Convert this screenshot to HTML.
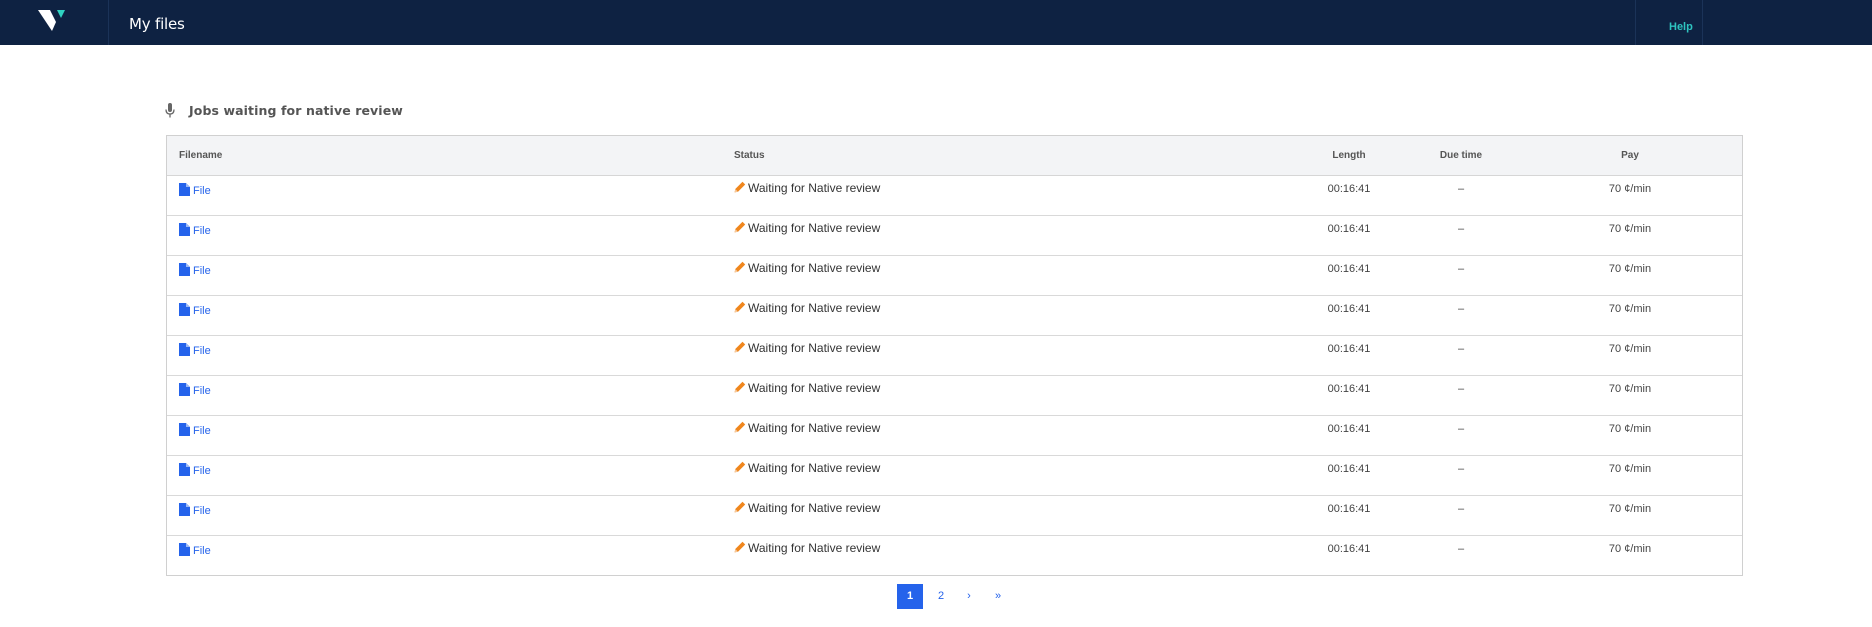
<!DOCTYPE html>
<html><head><meta charset="utf-8"><style>
*{margin:0;padding:0;box-sizing:border-box}
body{width:1872px;height:627px;background:#fff;font-family:"Liberation Sans",Arial,sans-serif;position:relative;overflow:hidden}
.hdr{position:absolute;left:0;top:0;width:1872px;height:45px;background:#0e2242}
.vl{position:absolute;top:0;width:1px;height:45px;background:#1b3358}
.title{position:absolute;left:129px;top:15px;color:#fff;font-size:15px;font-family:"DejaVu Sans","Liberation Sans",sans-serif;letter-spacing:-0.2px}
.help{position:absolute;left:1669px;top:21px;color:#2ec4c0;font-size:11px;font-weight:bold}
h2{position:absolute;left:189px;top:103px;font-size:12.5px;color:#555;font-family:"DejaVu Sans",sans-serif;font-weight:bold;letter-spacing:0.1px}
.tbl{position:absolute;left:166px;top:135px;width:1577px;height:441px;border:1px solid #d0d0d0}
.th{position:absolute;left:0;top:0;width:100%;height:40px;background:#f3f4f6;border-bottom:1px solid #d6d6d6}
.th span{position:absolute;top:14px;font-size:10px;font-weight:bold;color:#555}
.row{position:absolute;left:0;width:100%;height:40px;border-bottom:1px solid #d9d9d9}
.row:last-child{border-bottom:none}
.c{position:absolute;top:7px;font-size:11px;color:#444}
.f{left:12px;color:#2563eb;font-size:11px}
.f svg{vertical-align:-2px;margin-right:3px}
.s{left:567px;font-size:12px;color:#333;top:5px}
.s svg{vertical-align:-1px;margin-right:2px}
.ctr{transform:translateX(-50%)}
.pg{position:absolute;top:584px;height:25px;font-size:11px;color:#2563eb;text-align:center;line-height:25px;width:26px}
</style></head><body>
<div class="hdr">
<svg style="position:absolute;left:36px;top:9px" width="32" height="24" viewBox="0 0 32 24"><polygon points="2,1 14,1 20,13 16,22" fill="#fff"/><polygon points="21,1 29,1 25,9" fill="#2fd3c2"/></svg>
<div class="vl" style="left:108px"></div>
<div class="title">My files</div>
<div class="vl" style="left:1635px"></div>
<div class="help">Help</div>
<div class="vl" style="left:1702px"></div>
</div>
<svg style="position:absolute;left:165px;top:103px" width="10" height="15" viewBox="0 0 10 15"><rect x="3" y="0" width="4" height="9" rx="2" fill="#666"/><path d="M1 6.5 Q1 11 5 11 Q9 11 9 6.5" stroke="#666" stroke-width="1.3" fill="none"/><line x1="5" y1="11" x2="5" y2="14.5" stroke="#666" stroke-width="1.3"/></svg>
<h2>Jobs waiting for native review</h2>
<div class="tbl">
<div class="th"><span style="left:12px">Filename</span><span style="left:567px">Status</span><span style="left:1182px" class="ctr">Length</span><span style="left:1294px" class="ctr">Due time</span><span style="left:1463px" class="ctr">Pay</span></div>
<div id="rows"></div>
</div>
<div class="pg" style="left:897px;background:#2563eb;color:#fff;font-weight:bold">1</div>
<div class="pg" style="left:928px">2</div>
<div class="pg" style="left:956px">›</div>
<div class="pg" style="left:985px">»</div>
<script>
var h='';
for(var i=0;i<10;i++){
h+='<div class="row" style="top:'+(40+i*40)+'px">'+
'<div class="c f"><svg width="11" height="13" viewBox="0 0 11 13"><path d="M0 0H7L11 4V13H0Z" fill="#2563eb"/><path d="M7 0V4H11" fill="#9bb8f5"/></svg>File</div>'+
'<div class="c s"><svg width="12" height="12" viewBox="0 0 12 12"><path d="M8.5 0.8 L11.2 3.5 L4 10.7 L0.6 11.4 L1.3 8 Z" fill="#f0861d"/><path d="M1.3 8 L4 10.7 L0.6 11.4Z" fill="#f6c89a"/></svg>Waiting for Native review</div>'+
'<div class="c ctr" style="left:1182px">00:16:41</div>'+
'<div class="c ctr" style="left:1294px">–</div>'+
'<div class="c ctr" style="left:1463px">70 ¢/min</div></div>';}
document.getElementById('rows').innerHTML=h;
</script>
</body></html>
